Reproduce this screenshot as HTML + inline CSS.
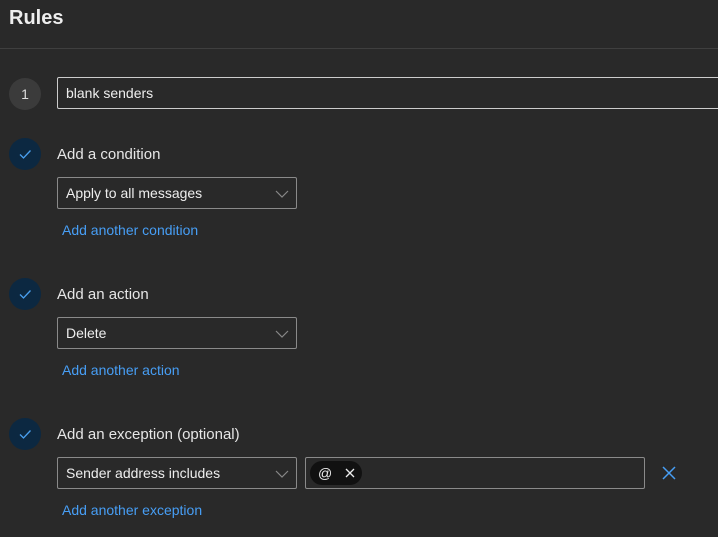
<!DOCTYPE html><html><head><style>
body{margin:0;width:718px;height:537px;background:#292929;font-family:"Liberation Sans",sans-serif;color:#fff;position:relative;overflow:hidden}
.a{position:absolute}
.t{left:9px;top:7px;font-size:20px;font-weight:bold;color:#eee}
.hr{left:0;top:48px;width:718px;height:1px;background:#3f3f3f}
.c{width:32px;height:32px;border-radius:50%;left:9px}
.n{background:#3b3b3b;color:#ddd;font-size:14px;text-align:center;line-height:32px}
.k{background:#0c2841}
.h{left:57px;font-size:15px;color:#e6e6e6}
.box{box-sizing:border-box;height:32px;border:1px solid #8a8a8a;border-radius:2px;font-size:14px;color:#eee;line-height:31px;padding-left:8px}
.dd{left:57px;width:240px}
.l{left:62px;font-size:14px;color:#479ef5}
</style></head><body>
<div class="a t">Rules</div>
<div class="a hr"></div>
<div class="a c n" style="top:78px">1</div>
<div class="a box" style="left:57px;top:77px;width:670px;border-color:#ccc">blank senders</div>
<svg width="0" height="0" style="position:absolute"><defs><symbol id="ck" viewBox="0 0 32 32"><path d="M11 16.5l3.5 3.5 7-7.5" fill="none" stroke="#4aa0f0" stroke-width="1.3"/></symbol><symbol id="ch" viewBox="0 0 14 8"><path d="M1 1l6 6 6-6" fill="none" stroke="#888" stroke-width="1.2"/></symbol></defs></svg>

<div class="a c k" style="top:138px"><svg width="32" height="32"><use href="#ck"/></svg></div>
<div class="a h" style="top:146px">Add a condition</div>
<div class="a box dd" style="top:177px">Apply to all messages<svg class="a" style="right:7px;top:12px" width="14" height="8"><use href="#ch"/></svg></div>
<div class="a l" style="top:222px">Add another condition</div>

<div class="a c k" style="top:278px"><svg width="32" height="32"><use href="#ck"/></svg></div>
<div class="a h" style="top:286px">Add an action</div>
<div class="a box dd" style="top:317px">Delete<svg class="a" style="right:7px;top:12px" width="14" height="8"><use href="#ch"/></svg></div>
<div class="a l" style="top:362px">Add another action</div>

<div class="a c k" style="top:418px"><svg width="32" height="32"><use href="#ck"/></svg></div>
<div class="a h" style="top:426px">Add an exception (optional)</div>
<div class="a box dd" style="top:457px">Sender address includes<svg class="a" style="right:7px;top:12px" width="14" height="8"><use href="#ch"/></svg></div>
<div class="a box" style="left:305px;top:457px;width:340px"></div>
<div class="a" style="left:310px;top:461px;width:52px;height:24px;border-radius:12px;background:#111;font-size:14px;color:#eee;line-height:24px"><span style="position:absolute;left:8px">@</span><svg class="a" style="left:35px;top:7px" width="10" height="10"><path d="M1 1l8 8M9 1l-8 8" stroke="#eee" stroke-width="1.3"/></svg></div>
<svg class="a" style="left:662px;top:466px" width="14" height="14"><path d="M1 1l12 12M13 1l-12 12" stroke="#479ef5" stroke-width="1.5"/></svg>
<div class="a l" style="top:502px">Add another exception</div>
</body></html>
